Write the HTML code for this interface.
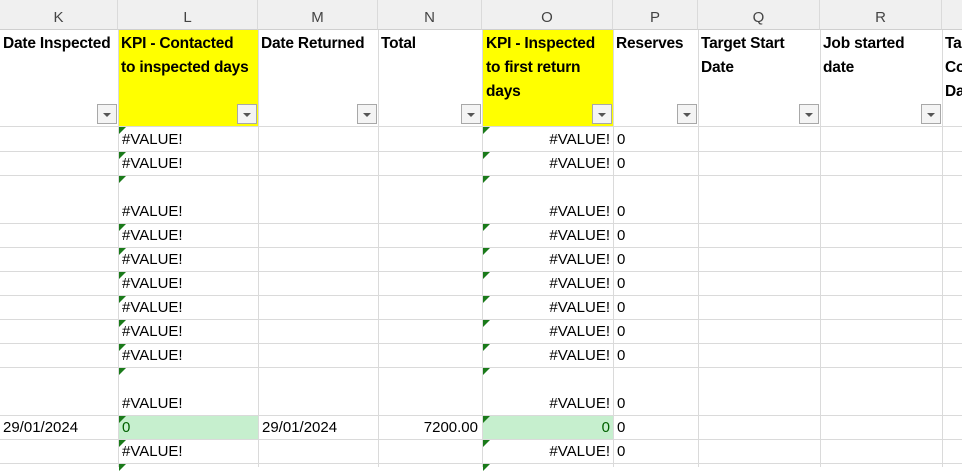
<!DOCTYPE html>
<html><head><style>
body{margin:0;width:962px;height:467px;overflow:hidden;background:#fff;font-family:"Liberation Sans",Carlito,sans-serif;position:relative}
.a{position:absolute}
.ch{top:0;height:30px;background:#f0f0f0;border-right:1px solid #dadada;border-bottom:1px solid #cfcfcf;box-sizing:border-box;text-align:center;line-height:36px;font-size:15px;color:#444}
.vl{top:30px;width:1px;height:437px;background:#dadada}
.hl{left:0;width:962px;height:1px;background:#dadada}
.hd{top:31px;height:95px;font-weight:bold;font-size:15.5px;letter-spacing:-0.2px;line-height:24px;padding:1px 0 0 3px;box-sizing:border-box;white-space:nowrap;overflow:hidden}
.fb{width:20px;height:20px;border:1px solid #a8a8a8;background:#f4f4f4;box-sizing:border-box}
.fb:after{content:"";position:absolute;left:5px;top:8px;border-left:4px solid transparent;border-right:4px solid transparent;border-top:4px solid #555}
.t{font-size:15px;height:20px;line-height:20px;white-space:nowrap}
.tri{width:0;height:0;border-top:7px solid #1a7a1a;border-right:7px solid transparent}
</style></head><body>
<div class="a ch" style="left:0;width:118px">K</div>
<div class="a ch" style="left:118px;width:140px">L</div>
<div class="a ch" style="left:258px;width:120px">M</div>
<div class="a ch" style="left:378px;width:104px">N</div>
<div class="a ch" style="left:482px;width:131px">O</div>
<div class="a ch" style="left:613px;width:85px">P</div>
<div class="a ch" style="left:698px;width:122px">Q</div>
<div class="a ch" style="left:820px;width:122px">R</div>
<div class="a ch" style="left:942px;width:30px"></div>

<div class="a" style="left:118px;top:30px;width:140px;height:97px;background:#ffff00"></div>
<div class="a" style="left:482px;top:30px;width:131px;height:97px;background:#ffff00"></div>
<div class="a" style="left:118px;top:415px;width:140px;height:24px;background:#c6efce"></div>
<div class="a" style="left:482px;top:415px;width:131px;height:24px;background:#c6efce"></div>

<div class="a vl" style="left:118px"></div><div class="a vl" style="left:258px"></div><div class="a vl" style="left:378px"></div><div class="a vl" style="left:482px"></div><div class="a vl" style="left:613px"></div><div class="a vl" style="left:698px"></div><div class="a vl" style="left:820px"></div><div class="a vl" style="left:942px"></div>
<div class="a hl" style="top:126px"></div><div class="a hl" style="top:151px"></div><div class="a hl" style="top:175px"></div><div class="a hl" style="top:223px"></div><div class="a hl" style="top:247px"></div><div class="a hl" style="top:271px"></div><div class="a hl" style="top:295px"></div><div class="a hl" style="top:319px"></div><div class="a hl" style="top:343px"></div><div class="a hl" style="top:367px"></div><div class="a hl" style="top:415px"></div><div class="a hl" style="top:439px"></div><div class="a hl" style="top:463px"></div>

<div class="a hd" style="left:0;width:118px">Date Inspected</div>
<div class="a hd" style="left:118px;width:140px">KPI - Contacted<br>to inspected days</div>
<div class="a hd" style="left:258px;width:120px">Date Returned</div>
<div class="a hd" style="left:378px;width:104px">Total</div>
<div class="a hd" style="left:482px;width:131px;padding-left:4px">KPI - Inspected<br>to first return<br>days</div>
<div class="a hd" style="left:613px;width:85px">Reserves</div>
<div class="a hd" style="left:698px;width:122px">Target Start<br>Date</div>
<div class="a hd" style="left:820px;width:122px">Job started<br>date</div>
<div class="a hd" style="left:942px;width:20px">Ta<br>Co<br>Da</div>

<div class="a fb" style="left:97px;top:104px"></div>
<div class="a fb" style="left:237px;top:104px"></div>
<div class="a fb" style="left:357px;top:104px"></div>
<div class="a fb" style="left:461px;top:104px"></div>
<div class="a fb" style="left:592px;top:104px"></div>
<div class="a fb" style="left:677px;top:104px"></div>
<div class="a fb" style="left:799px;top:104px"></div>
<div class="a fb" style="left:921px;top:104px"></div>

<div id="rows"></div>
<script>
var tops=[127,152,176,224,248,272,296,320,344,368,416,440,464];
var bots=[151,175,223,247,271,295,319,343,367,415,439,463,467];
var h='';
for(var i=0;i<tops.length;i++){
 var y=bots[i]-21;
 h+='<div class="a tri" style="left:119px;top:'+tops[i]+'px"></div><div class="a tri" style="left:483px;top:'+tops[i]+'px"></div>';
 if(i==12)continue;
 if(i==10){
  h+='<div class="a t" style="left:3px;top:'+y+'px">29/01/2024</div>';
  h+='<div class="a t" style="left:122px;top:'+y+'px;color:#006100">0</div>';
  h+='<div class="a t" style="left:262px;top:'+y+'px">29/01/2024</div>';
  h+='<div class="a t" style="left:378px;width:100px;text-align:right;top:'+y+'px">7200.00</div>';
  h+='<div class="a t" style="left:482px;width:128px;text-align:right;top:'+y+'px;color:#006100">0</div>';
 } else {
  h+='<div class="a t" style="left:122px;top:'+y+'px">#VALUE!</div>';
  h+='<div class="a t" style="left:482px;width:128px;text-align:right;top:'+y+'px">#VALUE!</div>';
 }
 h+='<div class="a t" style="left:617px;top:'+y+'px">0</div>';
}
document.getElementById('rows').innerHTML=h;
</script>
</body></html>
